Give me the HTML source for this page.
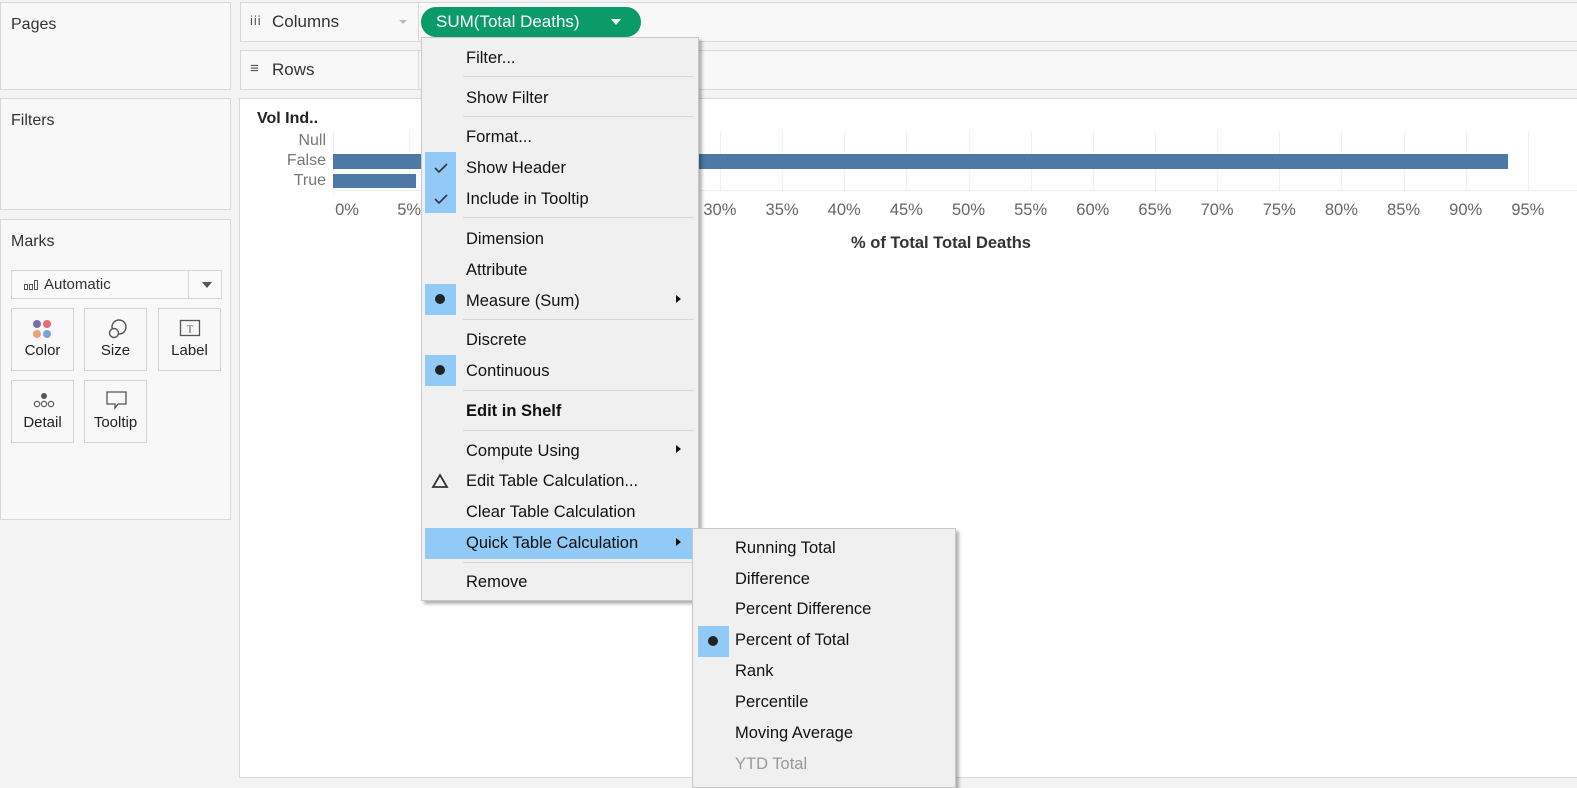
<!DOCTYPE html>
<html><head><meta charset="utf-8"><style>
*{box-sizing:border-box;margin:0;padding:0}
body{width:1577px;height:775px;background:#f3f3f3;font-family:"Liberation Sans",sans-serif;position:relative;overflow:hidden;color:#333}
.a{position:absolute}
.panel{position:absolute;background:#f8f8f8;border:1px solid #d8d8d8}
.ptitle{position:absolute;left:10px;top:13px;font-size:16px;color:#333}
.mbtn{position:absolute;width:63px;height:63px;border:1px solid #d4d4d4;background:#f8f8f8;font-size:15px;text-align:center;color:#222}
.mbtn span{position:absolute;left:0;right:0;bottom:11px}
.menu{position:absolute;background:#f0f0f0;border:1px solid #c8c8c8;box-shadow:3px 3px 3px rgba(0,0,0,.3);font-size:16.5px;color:#111}
.it{position:absolute;left:44px;white-space:nowrap}
.sub .it{left:42px}
.sep{position:absolute;left:41px;right:4px;height:1px;background:#d6d6d6}
.hl{position:absolute;background:#91c9f7}
.dot{position:absolute;width:10px;height:10px;border-radius:5px;background:#222}
.arr{position:absolute;width:0;height:0;border-top:4px solid transparent;border-bottom:4px solid transparent;border-left:5px solid #111}
.tick{position:absolute;top:201px;font-size:16.5px;color:#666;transform:translateX(-50%)}
.grid{position:absolute;top:131px;height:59px;width:1px;background:#f0f0f0}
</style></head><body>
<div class="panel" style="left:0;top:2px;width:231px;height:88px"><div class="ptitle">Pages</div></div>
<div class="panel" style="left:0;top:98px;width:231px;height:112px"><div class="ptitle">Filters</div></div>
<div class="panel" style="left:0;top:219px;width:231px;height:301px"><div class="ptitle">Marks</div>
 <div class="a" style="left:10px;top:50px;width:211px;height:29px;border:1px solid #d4d4d4;background:#fafafa;font-size:15px">
  <svg class="a" style="left:12px;top:9px" width="16" height="10"><rect x="0.5" y="4.5" width="3" height="5" fill="none" stroke="#555"/><rect x="5.5" y="4.5" width="3" height="5" fill="none" stroke="#555"/><rect x="10.5" y="0.5" width="3" height="9" fill="none" stroke="#555"/></svg>
  <span class="a" style="left:32px;top:5px;color:#333">Automatic</span>
  <span class="a" style="left:176px;top:0;width:1px;height:27px;background:#d4d4d4"></span>
  <span class="a" style="left:190px;top:11px;border-left:5px solid transparent;border-right:5px solid transparent;border-top:6px solid #555"></span>
 </div>
 <div class="mbtn" style="left:10px;top:88px">
  <i class="a" style="left:21px;top:11px;width:8px;height:8px;border-radius:4px;background:#7b6aa6"></i>
  <i class="a" style="left:31px;top:11px;width:8px;height:8px;border-radius:4px;background:#e76b78"></i>
  <i class="a" style="left:21px;top:21px;width:8px;height:8px;border-radius:4px;background:#f0a07a"></i>
  <i class="a" style="left:31px;top:21px;width:8px;height:8px;border-radius:4px;background:#7aa4d6"></i>
  <span>Color</span></div>
 <div class="mbtn" style="left:83px;top:88px">
  <svg class="a" style="left:20px;top:8px" width="24" height="24"><circle cx="14" cy="10" r="7" fill="none" stroke="#555" stroke-width="1.4"/><circle cx="9" cy="16" r="4.5" fill="#f8f8f8" stroke="#555" stroke-width="1.4"/></svg>
  <span>Size</span></div>
 <div class="mbtn" style="left:157px;top:88px">
  <svg class="a" style="left:20px;top:10px" width="22" height="20"><rect x="1.5" y="1.5" width="19" height="15" fill="none" stroke="#555" stroke-width="1.3"/><text x="11" y="13.5" font-size="11" text-anchor="middle" fill="#555" font-family="Liberation Serif">T</text></svg>
  <span>Label</span></div>
 <div class="mbtn" style="left:10px;top:160px">
  <svg class="a" style="left:18px;top:8px" width="28" height="22"><circle cx="14" cy="7" r="3" fill="#555"/><circle cx="7" cy="15" r="2.7" fill="none" stroke="#555" stroke-width="1.1"/><circle cx="14" cy="15" r="2.7" fill="none" stroke="#555" stroke-width="1.1"/><circle cx="21" cy="15" r="2.7" fill="none" stroke="#555" stroke-width="1.1"/></svg>
  <span>Detail</span></div>
 <div class="mbtn" style="left:83px;top:160px">
  <svg class="a" style="left:20px;top:9px" width="24" height="22"><path d="M2 2H21V14H13L10 18V14H2Z" fill="none" stroke="#555" stroke-width="1.3"/></svg>
  <span>Tooltip</span></div>
</div>
<div class="panel" style="left:240px;top:2px;width:1340px;height:40px;background:#f8f8f8">
 <span class="a" style="left:9px;top:10px;font-size:13px;color:#555;letter-spacing:1px">iii</span>
 <span class="a" style="left:31px;top:9px;font-size:17px">Columns</span>
 <span class="a" style="left:158px;top:17px;border-left:4px solid transparent;border-right:4px solid transparent;border-top:4px solid #bbb"></span>
 <span class="a" style="left:177px;top:0;width:1px;height:38px;background:#d8d8d8"></span>
</div>
<div class="panel" style="left:240px;top:50px;width:1340px;height:40px">
 <span class="a" style="left:9px;top:9px;font-size:15px;color:#555">≡</span>
 <span class="a" style="left:31px;top:9px;font-size:17px">Rows</span>
 <span class="a" style="left:177px;top:0;width:1px;height:38px;background:#d8d8d8"></span>
</div>
<div class="a" style="left:421px;top:7px;width:220px;height:30px;border-radius:15px;background:#0a9b69;color:#fff;font-size:17px">
 <span class="a" style="left:15px;top:5px">SUM(Total Deaths)</span>
 <span class="a" style="left:190px;top:12px;border-left:5px solid transparent;border-right:5px solid transparent;border-top:6px solid #fff"></span>
</div>
<div class="a" style="left:239px;top:98px;width:1340px;height:680px;background:#fff;border:1px solid #d8d8d8"></div>
<div class="a" style="left:257px;top:110px;font-size:16px;font-weight:bold;color:#222">Vol Ind..</div>
<div class="a" style="left:240px;top:131px;width:86px;text-align:right;font-size:16px;color:#777;line-height:20px">Null<br>False<br>True</div>
<div class="a" style="left:333px;top:131px;width:1px;height:64px;background:#eee"></div>
<div class="a" style="left:333px;top:190px;width:1244px;height:1px;background:#eee"></div>
<div id="g"></div>
<div class="a" style="left:333px;top:154px;width:1175px;height:15px;background:#4e79a7"></div>
<div class="a" style="left:333px;top:174px;width:83px;height:14px;background:#4e79a7"></div>
<div class="a" style="left:851px;top:234px;font-size:16.5px;font-weight:bold;color:#333">% of Total Total Deaths</div>
<script>
var h='';for(var i=0;i<20;i++){var x=347+i*62.15;h+='<div class="tick" style="left:'+x+'px">'+(i*5)+'%</div>';if(i>0)h+='<div class="grid" style="left:'+Math.round(x)+'px"></div>';}
document.getElementById('g').innerHTML=h;
</script>
<div class="menu" style="left:421px;top:37px;width:278px;height:564px">
 <div class="it" style="top:11px">Filter...</div><div class="sep" style="top:38px"></div>
 <div class="it" style="top:51px">Show Filter</div><div class="sep" style="top:78px"></div>
 <div class="it" style="top:90px">Format...</div>
 <div class="hl" style="left:3px;top:114px;width:31px;height:61px"></div>
 <svg class="a" style="left:11px;top:123px" width="16" height="44"><path d="M2 7L6 11L14 3M2 38L6 42L14 34" fill="none" stroke="#333" stroke-width="1.6"/></svg>
 <div class="it" style="top:121px">Show Header</div>
 <div class="it" style="top:152px">Include in Tooltip</div><div class="sep" style="top:179px"></div>
 <div class="it" style="top:192px">Dimension</div>
 <div class="it" style="top:223px">Attribute</div>
 <div class="hl" style="left:3px;top:246px;width:31px;height:31px"></div><div class="dot" style="left:13px;top:256px"></div>
 <div class="it" style="top:254px">Measure (Sum)</div><div class="arr" style="left:254px;top:257px"></div>
 <div class="sep" style="top:281px"></div>
 <div class="it" style="top:293px">Discrete</div>
 <div class="hl" style="left:3px;top:317px;width:31px;height:31px"></div><div class="dot" style="left:13px;top:327px"></div>
 <div class="it" style="top:324px">Continuous</div><div class="sep" style="top:352px"></div>
 <div class="it" style="top:364px;font-weight:bold">Edit in Shelf</div><div class="sep" style="top:392px"></div>
 <div class="it" style="top:404px">Compute Using</div><div class="arr" style="left:254px;top:407px"></div>
 <svg class="a" style="left:9px;top:435px" width="18" height="16"><path d="M9 2L16 14H2Z" fill="none" stroke="#333" stroke-width="1.8"/></svg>
 <div class="it" style="top:434px">Edit Table Calculation...</div>
 <div class="it" style="top:465px">Clear Table Calculation</div>
 <div class="hl" style="left:3px;top:490px;width:269px;height:31px"></div>
 <div class="it" style="top:496px">Quick Table Calculation</div><div class="arr" style="left:254px;top:500px"></div>
 <div class="sep" style="top:524px"></div>
 <div class="it" style="top:535px">Remove</div>
</div>
<div class="menu sub" style="left:692px;top:528px;width:264px;height:260px">
 <div class="it" style="top:10px">Running Total</div>
 <div class="it" style="top:41px">Difference</div>
 <div class="it" style="top:71px">Percent Difference</div>
 <div class="hl" style="left:5px;top:97px;width:31px;height:31px"></div><div class="dot" style="left:15px;top:107px"></div>
 <div class="it" style="top:102px">Percent of Total</div>
 <div class="it" style="top:133px">Rank</div>
 <div class="it" style="top:164px">Percentile</div>
 <div class="it" style="top:195px">Moving Average</div>
 <div class="it" style="top:226px;color:#999">YTD Total</div>
</div>
</body></html>
